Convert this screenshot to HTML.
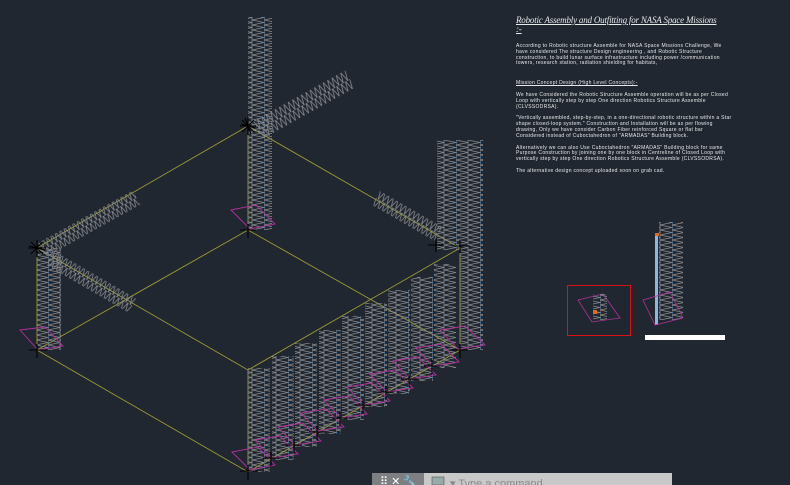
<!DOCTYPE html>
<html><head><style>
html,body{margin:0;padding:0;background:#212730;width:790px;height:485px;overflow:hidden;font-family:"Liberation Sans",sans-serif}
#t{position:absolute;left:516px;top:16px;width:216px;color:#e6e8ea;font-size:5px;line-height:5.8px;letter-spacing:0.3px}
#t h1{font-family:"Liberation Serif",serif;font-style:italic;font-weight:normal;font-size:9px;line-height:9px;margin:0 0 10px;text-decoration:underline;letter-spacing:-0.2px;white-space:nowrap}
#t p{margin:0 0 6px}
</style></head><body>
<svg width="790" height="485" style="position:absolute;left:0;top:0">
<defs>
<pattern id="zz" width="24" height="5" patternUnits="userSpaceOnUse">
<path d="M0 0L12 2.5L0 5M12 0L24 2.5L12 5M0 0V5M12 0V5" stroke="#878a8e" stroke-width="0.8" fill="none"/>
<circle cx="0.5" cy="2.5" r="0.6" fill="#3a7ec0"/>
</pattern>
<pattern id="zh" width="5" height="20" patternUnits="userSpaceOnUse">
<path d="M0 0L2.5 10L5 0M0 10L2.5 20L5 10M0 0H5" stroke="#878a8e" stroke-width="0.8" fill="none"/>
</pattern>
</defs>
<g stroke="#9c9a36" stroke-width="0.9" fill="none">
<path d="M248 126L37 248L248 370L460 248Z"/>
<path d="M248 230L37 350L248 472L460 350Z"/>
<path d="M248 126V230M37 248V350M460 248V350M248 370V472"/>
</g>
<rect x="248" y="17" width="24" height="213" fill="url(#zz)"/>
<g transform="translate(258,130) rotate(-29)"><rect x="0" y="-10" width="105" height="20" fill="url(#zh)"/></g>
<rect x="37" y="248" width="24" height="102" fill="url(#zz)"/>
<g transform="translate(42,250) rotate(-29)"><rect x="0" y="-8" width="108" height="16" fill="url(#zh)"/></g>
<g transform="translate(50,258) rotate(30)"><rect x="0" y="-8" width="95" height="16" fill="url(#zh)"/></g>
<g transform="translate(376,198) rotate(30)"><rect x="0" y="-8" width="72" height="16" fill="url(#zh)"/></g>
<rect x="437" y="140" width="24" height="110" fill="url(#zz)"/>
<rect x="460" y="140" width="23" height="210" fill="url(#zz)"/>
<g fill="url(#zz)">
<rect x="248" y="368" width="22" height="104"/>
<rect x="272" y="356" width="22" height="104"/>
<rect x="295" y="343" width="22" height="104"/>
<rect x="319" y="330" width="22" height="104"/>
<rect x="342" y="316" width="22" height="104"/>
<rect x="365" y="303" width="22" height="104"/>
<rect x="388" y="290" width="22" height="104"/>
<rect x="411" y="277" width="22" height="104"/>
<rect x="434" y="264" width="22" height="104"/>
</g>
<g stroke="#b0309c" stroke-width="0.9" fill="none">
<path d="M231 210L256 205L275 224L250 229Z"/>
<path d="M20 330L45 327L63 346L38 350Z"/>
<path d="M232 452L258 447L275 465L250 470Z"/>
<path d="M255 440L280 436L298 454L272 458Z"/>
<path d="M278 427L303 423L321 441L295 445Z"/>
<path d="M301 413L326 409L344 427L318 431Z"/>
<path d="M324 400L349 396L367 414L341 418Z"/>
<path d="M347 387L372 383L390 401L364 405Z"/>
<path d="M370 374L395 370L413 388L387 392Z"/>
<path d="M393 361L418 357L436 375L410 379Z"/>
<path d="M416 348L441 344L459 362L433 366Z"/>
<path d="M440 330L465 326L485 345L458 349Z"/>
</g>
<g stroke="#000" stroke-width="1.1">
<path d="M240 126L256 126M248 117V135M242 120L254 132M254 120L242 132M241 124L255 128M245 118L251 134"/>
<path d="M28 248L46 248M37 240V257M31 242L43 254M43 242L31 254M29 246L45 250"/>
<path d="M240 230L256 230M248 224V238M29 350H47M37 344V358"/>
<path d="M428 245H444M436 239V252M452 246H470M460 240V253"/>
<path d="M240 471H258M248 465V480M263 458H279M271 452V466M286 445H302M294 439V453M309 432H325M317 426V440M332 418H348M340 412V426M355 405H371M363 399V413M378 392H394M386 386V400M401 379H417M409 373V387M424 366H440M432 360V374M452 350H468M460 344V358"/>
</g>
<rect x="567.5" y="285.5" width="63" height="50" fill="none" stroke="#d11" stroke-width="1"/>
<path d="M578 300L603 294L620 318L592 322Z" fill="none" stroke="#b0309c" stroke-width="0.8"/>
<rect x="593" y="294" width="14" height="26" fill="url(#zz)"/>
<rect x="593" y="310" width="4" height="4" fill="#e06a20"/>
<rect x="659" y="222" width="24" height="98" fill="url(#zz)"/>
<rect x="655" y="235" width="3" height="90" fill="#8db6e0"/>
<rect x="655" y="233" width="4" height="3" fill="#e06a20"/>
<path d="M643 300L670 292L683 318L655 325Z" fill="none" stroke="#b0309c" stroke-width="0.8"/>
<rect x="645" y="335" width="80" height="5" fill="#fff"/>
<rect x="372" y="473" width="300" height="12" fill="#c8c8c8"/>
<rect x="372" y="473" width="52" height="12" fill="#7d7f82"/>
<rect x="432" y="477" width="12" height="8" fill="#9aa" stroke="#555" stroke-width="0.6"/>
<text x="380" y="485" font-size="11" fill="#fff" font-family="Liberation Sans">⠿ ✕ 🔧</text>
<text x="450" y="487" font-size="11" fill="#8a8a8a" font-family="Liberation Sans">▾ Type a command</text>
</svg>
<div id="t">
<h1>Robotic Assembly and Outfitting for NASA Space Missions<br>:-</h1>
<p>According to Robotic structure Assemble for NASA Space Missions Challenge, We have considered The structure Design engineering , and Robotic Structure construction, to build lunar surface infrastructure including power /communication towers, research station, radiation shielding for habitats,</p>
<p style="margin-top:14px;text-decoration:underline">Mission Concept Design (High Level Concepts):-</p>
<p>We have Considered the Robotic Structure Assemble operation will be as per Closed Loop with vertically step by step One direction Robotics Structure Assemble (CLVSSODRSA).</p>
<p>"Vertically assembled, step-by-step, in a one-directional robotic structure within a Star shape closed-loop system." Construction and Installation will be as per flowing drawing, Only we have consider Carbon Fiber reinforced Square or flat bar Considered instead of Cuboctahedron of "ARMADAS" Building block.</p>
<p>Alternatively we can also Use Cuboctahedron "ARMADAS" Building block for same Purpose Construction by joining one by one block in Centreline of Closed Loop with vertically step by step One direction Robotics Structure Assemble (CLVSSODRSA).</p>
<p>The alternative design concept uploaded soon on grab cad.</p>
</div>
</body></html>
